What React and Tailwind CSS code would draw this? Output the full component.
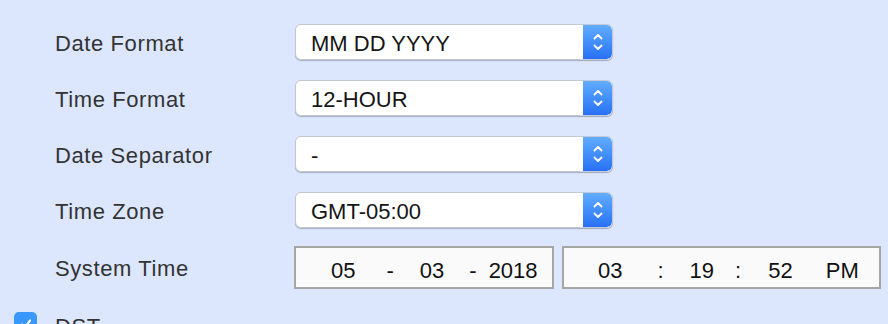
import React from 'react'

const font = { fontFamily: '"Liberation Sans", Arial, sans-serif' }

function Stepper() {
  return (
    <div className="flex w-[29px] shrink-0 items-center justify-center rounded-r-[5px] bg-gradient-to-b from-[#62acff] to-[#2870f5]">
      <svg width="12" height="20" viewBox="0 0 12 20" fill="none" stroke="white" strokeWidth="1.8" strokeLinecap="round" strokeLinejoin="round">
        <path d="M2.5 6.5 L6 3 L9.5 6.5" />
        <path d="M2.5 13.5 L6 17 L9.5 13.5" />
      </svg>
    </div>
  )
}

function Select({ value }) {
  return (
    <div className="flex h-[36px] w-[318px] overflow-hidden rounded-[6px] border border-[#c3c8d2] bg-white shadow-[0_1px_1px_rgba(60,70,90,0.35)]">
      <div className="flex flex-1 items-center pl-[15px] pt-[2px] text-[22px] text-[#151515]">{value}</div>
      <Stepper />
    </div>
  )
}

function Row({ label, children, className = '' }) {
  return (
    <div className={`flex items-center ${className}`}>
      <div className="w-[295px] shrink-0 pl-[55px] pt-[2px] text-[22px] tracking-[0.6px] text-[#333]">{label}</div>
      {children}
    </div>
  )
}

export default function App() {
  return (
    <div style={font} className="h-[324px] w-[888px] overflow-hidden bg-[#dce6fc] pt-[24px]">
      <div className="flex flex-col">
        <Row label="Date Format" className="h-[36px]">
          <Select value="MM DD YYYY" />
        </Row>
        <Row label="Time Format" className="mt-[20px] h-[36px]">
          <Select value="12-HOUR" />
        </Row>
        <Row label="Date Separator" className="mt-[20px] h-[36px]">
          <Select value="-" />
        </Row>
        <Row label="Time Zone" className="mt-[20px] h-[36px]">
          <Select value="GMT-05:00" />
        </Row>
        <Row label="System Time" className="mt-[18px] h-[43px]">
          <div className="ml-[-1px] flex h-[43px] w-[260px] items-center border-2 border-[#a6a6a6] bg-[#fafafa] pl-[35px] pt-[5px] text-[22px] text-[#111]">
            <span>05</span>
            <span className="ml-[31px]">-</span>
            <span className="ml-[26px]">03</span>
            <span className="ml-[25px]">-</span>
            <span className="ml-[12px]">2018</span>
          </div>
          <div className="ml-[8px] flex h-[43px] w-[319px] items-center border-2 border-[#a6a6a6] bg-[#fafafa] pl-[34px] pt-[5px] text-[22px] text-[#111]">
            <span>03</span>
            <span className="ml-[35px]">:</span>
            <span className="ml-[26px]">19</span>
            <span className="ml-[21px]">:</span>
            <span className="ml-[27px]">52</span>
            <span className="ml-[33px]">PM</span>
          </div>
        </Row>
        <div className="mt-[23px] flex items-start">
          <div className="ml-[14px] flex h-[23px] w-[23px] items-center justify-center rounded-[5px] bg-[#3a97fb]">
            <svg width="14" height="14" viewBox="0 0 14 14" fill="none" stroke="white" strokeWidth="2.2" strokeLinecap="round" strokeLinejoin="round">
              <path d="M3 7.5 L6 10.5 L11 3.5" />
            </svg>
          </div>
          <span className="ml-[18px] mt-[-2px] text-[22px] tracking-[0.6px] text-[#333]">DST</span>
        </div>
      </div>
    </div>
  )
}
